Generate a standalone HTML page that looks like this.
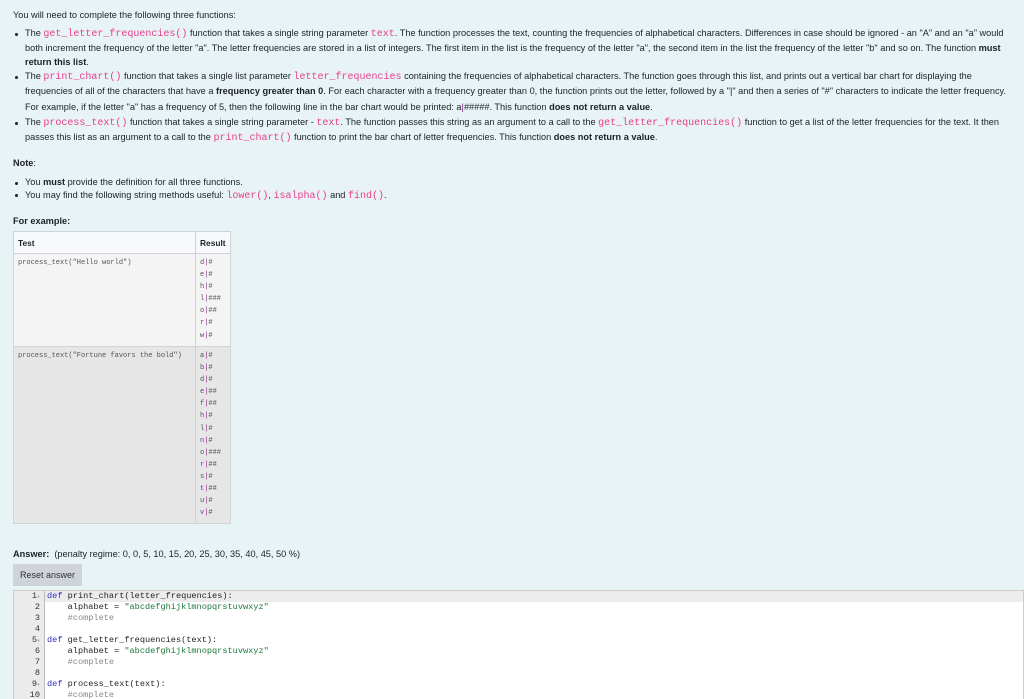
<!DOCTYPE html>
<html><head><meta charset="utf-8"><style>
html,body{margin:0;width:1024px;height:699px;overflow:hidden;}
body{background:#e7f3f5;font-family:"Liberation Sans",sans-serif;color:#1d2125;position:relative;}
.l{position:absolute;white-space:nowrap;font-size:9.2px;line-height:12px;}
.c{font-family:"Liberation Mono",monospace;color:#e83e8c;font-size:10px;}
.dot{position:absolute;width:3px;height:3px;border-radius:50%;background:#1d2125;}
table{position:absolute;left:13px;top:231px;border-collapse:collapse;font-size:8.4px;}
td{border:1px solid #d0d3d6;vertical-align:top;padding:0 4px;}
.m{font-family:"Liberation Mono",monospace;font-size:7px;color:#555;line-height:12.1px;}
.p{color:#7a1e7e;}
.code{position:absolute;left:13px;top:590px;width:1009px;height:108px;background:#fff;border:1px solid #ccc;border-bottom:none;font-family:"Liberation Mono",monospace;font-size:8.6px;overflow:hidden;}
.gut{position:absolute;left:0;top:0;width:30px;height:120px;background:#ebebeb;border-right:1px solid #bbb;}
.cl{position:absolute;left:0;white-space:pre;line-height:11px;}
.n{position:absolute;width:26px;text-align:right;color:#333;}
.k{color:#3030c0}.s{color:#1a7a3a}.cm{color:#888}
</style></head><body>
<div class="l" style="left:13px;top:9px">You will need to complete the following three functions:</div>
<div class="dot" style="left:15px;top:33px"></div><div class="dot" style="left:15px;top:76px"></div><div class="dot" style="left:15px;top:122px"></div>
<div class="l" style="left:25px;top:27px">The <span class="c">get_letter_frequencies()</span> function that takes a single string parameter <span class="c">text</span>. The function processes the text, counting the frequencies of alphabetical characters. Differences in case should be ignored - an "A" and an "a" would</div>
<div class="l" style="left:25px;top:42px">both increment the frequency of the letter "a". The letter frequencies are stored in a list of integers. The first item in the list is the frequency of the letter "a", the second item in the list the frequency of the letter "b" and so on. The function <b>must</b></div>
<div class="l" style="left:25px;top:56px"><b>return this list</b>.</div>
<div class="l" style="left:25px;top:70px">The <span class="c">print_chart()</span> function that takes a single list parameter <span class="c">letter_frequencies</span> containing the frequencies of alphabetical characters. The function goes through this list, and prints out a vertical bar chart for displaying the</div>
<div class="l" style="left:25px;top:85px">frequencies of all of the characters that have a <b>frequency greater than 0</b>. For each character with a frequency greater than 0, the function prints out the letter, followed by a "|" and then a series of "#" characters to indicate the letter frequency.</div>
<div class="l" style="left:25px;top:101px">For example, if the letter "a" has a frequency of 5, then the following line in the bar chart would be printed: a<span class="p">|</span>#####. This function <b>does not return a value</b>.</div>
<div class="l" style="left:25px;top:116px">The <span class="c">process_text()</span> function that takes a single string parameter - <span class="c">text</span>. The function passes this string as an argument to a call to the <span class="c">get_letter_frequencies()</span> function to get a list of the letter frequencies for the text. It then</div>
<div class="l" style="left:25px;top:131px">passes this list as an argument to a call to the <span class="c">print_chart()</span> function to print the bar chart of letter frequencies. This function <b>does not return a value</b>.</div>
<div class="l" style="left:13px;top:157px"><b>Note</b>:</div>
<div class="dot" style="left:15px;top:182px"></div><div class="dot" style="left:15px;top:194px"></div>
<div class="l" style="left:25px;top:176px">You <b>must</b> provide the definition for all three functions.</div>
<div class="l" style="left:25px;top:189px">You may find the following string methods useful: <span class="c">lower()</span>, <span class="c">isalpha()</span> and <span class="c">find()</span>.</div>
<div class="l" style="left:13px;top:215px"><b>For example:</b></div>
<table>
<tr style="background:#f8f9fc;height:22px"><td style="width:173px;vertical-align:middle"><b>Test</b></td><td style="width:24px;vertical-align:middle"><b>Result</b></td></tr>
<tr style="background:#f4f4f4;height:93px"><td class="m" style="padding-top:3px">process_text("Hello world")</td><td class="m" style="padding-top:3px">d<span class="p">|</span>#<br>e<span class="p">|</span>#<br>h<span class="p">|</span>#<br>l<span class="p">|</span>###<br>o<span class="p">|</span>##<br>r<span class="p">|</span>#<br>w<span class="p">|</span>#</td></tr>
<tr style="background:#e6e6e6;height:177px"><td class="m" style="padding-top:3px">process_text("Fortune favors the bold")</td><td class="m" style="padding-top:3px">a<span class="p">|</span>#<br>b<span class="p">|</span>#<br>d<span class="p">|</span>#<br>e<span class="p">|</span>##<br>f<span class="p">|</span>##<br>h<span class="p">|</span>#<br>l<span class="p">|</span>#<br>n<span class="p">|</span>#<br>o<span class="p">|</span>###<br>r<span class="p">|</span>##<br>s<span class="p">|</span>#<br>t<span class="p">|</span>##<br>u<span class="p">|</span>#<br>v<span class="p">|</span>#</td></tr>
</table>
<div class="l" style="left:13px;top:548px"><b>Answer:</b>&nbsp; (penalty regime: 0, 0, 5, 10, 15, 20, 25, 30, 35, 40, 45, 50 %)</div>
<div style="position:absolute;left:13px;top:564px;width:69px;height:22px;background:#ced4da;font-size:9px;line-height:22px;text-align:center;color:#333">Reset answer</div>
<div class="code">
<div style="position:absolute;left:0;top:0;width:1009px;height:11px;background:#ececec"></div>
<div class="gut"></div>
<div class="n" style="top:0">1<span style="font-size:5px;color:#888">▾</span></div>
<div class="n" style="top:11px">2</div><div class="n" style="top:22px">3</div><div class="n" style="top:33px">4</div>
<div class="n" style="top:44px">5<span style="font-size:5px;color:#888">▾</span></div>
<div class="n" style="top:55px">6</div><div class="n" style="top:66px">7</div><div class="n" style="top:77px">8</div>
<div class="n" style="top:88px">9<span style="font-size:5px;color:#888">▾</span></div><div class="n" style="top:99px">10</div>
<div class="cl" style="left:33px;top:0"><span class="k">def</span> print_chart(letter_frequencies):
    alphabet = <span class="s">"abcdefghijklmnopqrstuvwxyz"</span>
    <span class="cm">#complete</span>

<span class="k">def</span> get_letter_frequencies(text):
    alphabet = <span class="s">"abcdefghijklmnopqrstuvwxyz"</span>
    <span class="cm">#complete</span>

<span class="k">def</span> process_text(text):
    <span class="cm">#complete</span></div>
</div>
</body></html>
